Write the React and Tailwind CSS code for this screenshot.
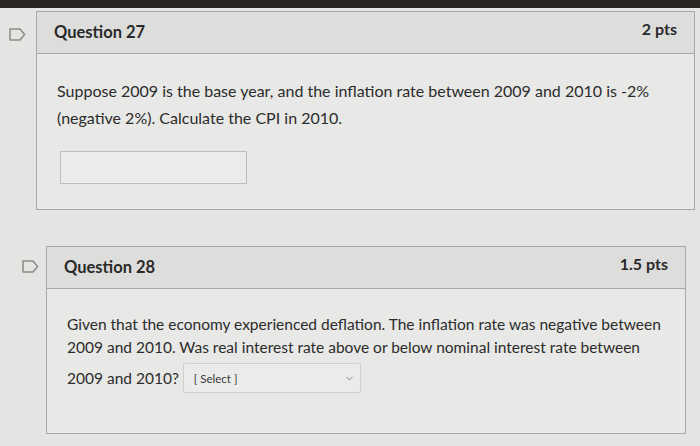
import { ChevronDown } from "lucide-react";

function Flag() {
  return (
    <svg width="17" height="13" viewBox="0 0 17 13" fill="none">
      <path d="M1 1 H11 L15.5 6.5 L11 12 H1 Z" stroke="#8a8a88" strokeWidth="1.5" strokeLinejoin="round" />
    </svg>
  );
}

function Header({ title, pts }) {
  return (
    <div className="flex h-[42px] items-center justify-between border-b border-[#a8a8a6] bg-[#dddddb] pl-[17px] pr-[17px]">
      <h2 className="text-[16.5px] font-bold text-[#2a2a2a]">{title}</h2>
      <span className="-mt-[8px] text-[16px] font-bold text-[#2a2a2a]">{pts}</span>
    </div>
  );
}

export default function App() {
  return (
    <div className="h-[446px] w-[700px] overflow-hidden bg-[#e4e4e2] font-['Lato','Liberation_Sans',sans-serif] text-[#2c2c2c]">
      <div className="h-[8px] bg-[#2b2522]" />

      {/* Question 27 */}
      <div className="mt-[3px] flex">
        <div className="w-[36px] pl-[9px] pt-[17px]">
          <Flag />
        </div>
        <div className="h-[199px] w-[659px] border border-[#a8a8a6] bg-[#e8e8e6]">
          <Header title="Question 27" pts="2 pts" />
          <div className="pl-[20px] pt-[23px]">
            <p className="w-[620px] text-[16px] leading-[27px]">
              Suppose 2009 is the base year, and the inflation rate between 2009 and 2010 is -2%
              (negative 2%). Calculate the CPI in 2010.
            </p>
            <input
              type="text"
              className="ml-[3px] mt-[20px] h-[33px] w-[187px] border border-[#bdbdbb] bg-[#ebebe9] outline-none"
            />
          </div>
        </div>
      </div>

      {/* Question 28 */}
      <div className="mt-[36px] flex">
        <div className="w-[46px] pl-[22px] pt-[14px]">
          <Flag />
        </div>
        <div className="h-[188px] w-[640px] border border-[#a8a8a6] bg-[#e8e8e6]">
          <Header title="Question 28" pts="1.5 pts" />
          <div className="pl-[20px] pr-[10px] pt-[24px] text-[15.5px] leading-[23px]">
            <p>
              Given that the economy experienced deflation. The inflation rate was negative between
              2009 and 2010. Was real interest rate above or below nominal interest rate between
            </p>
            <div className="mt-[4px] flex items-center gap-[4px]">
              <span>2009 and 2010?</span>
              <div className="flex h-[30px] w-[178px] items-center justify-between rounded-[2px] border border-[#cfcfcd] bg-[#ebebe9] pl-[10px] pr-[5px]">
                <span className="text-[11.5px] text-[#3a3a3a]">[ Select ]</span>
                <ChevronDown size={11} color="#666" strokeWidth={1.6} />
              </div>
            </div>
          </div>
        </div>
      </div>
    </div>
  );
}
